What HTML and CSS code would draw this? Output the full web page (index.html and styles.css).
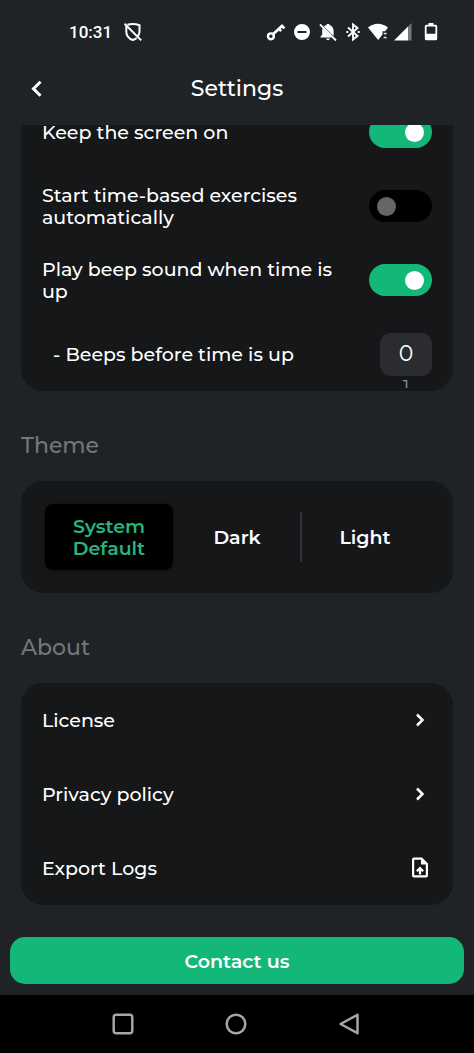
FILE: index.html
```html
<!DOCTYPE html>
<html lang="en">
<head>
<meta charset="utf-8">
<meta name="viewport" content="width=device-width, initial-scale=1">
<title>Settings</title>
<link rel="stylesheet" href="styles.css">
</head>
<body>
<div class="app">
  <div class="status-bar">
    <div class="status-left">
      <time class="clock">10:31</time>
      <svg class="status-icon" viewBox="0 0 20 20" fill="none" stroke="currentColor" stroke-width="2" aria-hidden="true"><path d="M4.500 2.800 Q10 1 16.500 3.200 V9.500 Q16.500 12.200 14.900 14.200 M3.300 4 V9.500 C3.300 14 6 16.800 10 18 C11.500 17.600 12.700 16.900 13.700 16 M1.600 1.800 L18.200 18.400"/></svg>
    </div>
    <div class="status-right">
      <svg class="status-icon" viewBox="0 0 20 20" fill="none" stroke="currentColor" aria-hidden="true"><circle cx="4.900" cy="14.300" r="2.900" stroke-width="2.400"/><path d="M7 12.200 L17 3 M13 6.800 L15.200 9.200 M16 3.900 L18.400 6.400" stroke-width="2.700"/></svg>
      <svg class="status-icon" viewBox="0 0 20 20" aria-hidden="true"><path fill="currentColor" fill-rule="evenodd" d="M10 2a8 8 0 1 0 0 16 8 8 0 0 0 0-16M5.500 9h9v2h-9z"/></svg>
      <svg class="status-icon" viewBox="0 0 20 20" aria-hidden="true"><path fill="currentColor" d="M5.900 4.500 Q7 3.500 8.700 3.100 V2 h2.600 v1.100 C14.300 3.800 15.600 6.200 15.600 9 v5 zM4.600 6.300 L13.800 15.500 H2.500 V14.500 L4.200 12.800 V9 Q4.200 7.500 4.600 6.300M8.200 16.400h3.600 a1.800 1.800 0 0 1-3.600 0"/><path d="M2 2.500 L18 18.500" stroke="currentColor" stroke-width="1.800"/></svg>
      <svg class="status-icon narrow" viewBox="1 0 18 20" fill="none" stroke="currentColor" stroke-width="1.900" aria-hidden="true"><path d="M5 5.500 L14.500 14 L10 17.500 V2.500 L14.500 6 L5 14.500"/><path d="M4.300 9v2M15.700 9v2" stroke-width="2"/></svg>
      <svg class="status-icon" viewBox="0 0 20 20" aria-hidden="true"><path fill="currentColor" d="M0 5.500 Q10-2 20 5.500 L17.200 9.200 H14.500 V12.600 L10.200 18 z"/><path d="M15.600 11.200 l1.500 1.200 1.600-1.300zM15.600 16 l1.500-1.300 1.600 1.300z" fill="currentColor" stroke="currentColor" stroke-width=".5"/></svg>
      <svg class="status-icon narrow" viewBox="0 0 18 20" aria-hidden="true"><path fill="currentColor" d="M0 18.500 L14 4.500 V18.500z"/><path fill="#73777b" d="M14 4.500 L17.500 1 V18.500 H14z"/></svg>
      <svg class="status-icon battery" viewBox="0 0 20 20" aria-hidden="true"><path fill="currentColor" fill-rule="evenodd" d="M7.500 1h5v1.800h2.200q1.500 0 1.500 1.500v12.400q0 1.500-1.500 1.500H5.300q-1.500 0-1.500-1.500V4.300q0-1.500 1.500-1.500h2.200zM5.600 4.600v7.200h8.800V4.600z"/></svg>
    </div>
  </div>

  <header class="top-bar">
    <button class="back" type="button" aria-label="Back"><svg viewBox="0 0 24 24" fill="none" stroke="currentColor" stroke-width="3" aria-hidden="true"><path d="M16.500 4.800 L9.500 11.800 L16.500 18.800"/></svg></button>
    <h1 class="title">Settings</h1>
  </header>

  <main class="content">
    <section class="card">
      <div class="row">
        <label class="row-label" for="screen-on">Keep the screen on</label>
        <input class="toggle" type="checkbox" role="switch" id="screen-on" checked>
      </div>
      <div class="row">
        <label class="row-label" for="auto-start">Start time-based exercises automatically</label>
        <input class="toggle" type="checkbox" role="switch" id="auto-start">
      </div>
      <div class="row">
        <label class="row-label" for="beep">Play beep sound when time is up</label>
        <input class="toggle" type="checkbox" role="switch" id="beep" checked>
      </div>
      <div class="row">
        <label class="row-label nested" for="beeps">- Beeps before time is up</label>
        <div class="picker">
          <input class="picker-value" type="text" inputmode="numeric" id="beeps" value="0">
          <span class="picker-next" aria-hidden="true">1</span>
        </div>
      </div>
    </section>

    <h2 class="section-title" id="theme-title">Theme</h2>
    <div class="card themes" role="radiogroup" aria-labelledby="theme-title">
      <label class="theme"><input class="theme-input" type="radio" name="theme" checked><span class="theme-name">System Default</span></label>
      <label class="theme"><input class="theme-input" type="radio" name="theme"><span class="theme-name">Dark</span></label>
      <label class="theme divided"><input class="theme-input" type="radio" name="theme"><span class="theme-name">Light</span></label>
    </div>

    <h2 class="section-title">About</h2>
    <nav class="card" aria-label="About">
      <a class="row" href="#license"><span class="row-label">License</span><svg class="row-icon" viewBox="0 0 24 24" fill="none" stroke="currentColor" stroke-width="2.500" aria-hidden="true"><path d="M9 6.500 L14.500 12 L9 17.500"/></svg></a>
      <a class="row" href="#privacy"><span class="row-label">Privacy policy</span><svg class="row-icon" viewBox="0 0 24 24" fill="none" stroke="currentColor" stroke-width="2.500" aria-hidden="true"><path d="M9 6.500 L14.500 12 L9 17.500"/></svg></a>
      <a class="row" href="#logs"><span class="row-label">Export Logs</span><svg class="row-icon" viewBox="0 0 24 24" aria-hidden="true"><path fill="currentColor" fill-rule="evenodd" d="M6 1.500h8l6 6v12q0 2-2 2H6q-2 0-2-2V3.500q0-2 2-2M6.200 3.700v15.600h11.600V8.500H13V3.700z"/><path d="M12 18.500v-6M8.800 15.300 L12 12.100 L15.200 15.300" fill="none" stroke="currentColor" stroke-width="2.200"/></svg></a>
    </nav>
  </main>

  <footer class="actions">
    <button class="contact" type="button">Contact us</button>
  </footer>

  <nav class="system-nav" aria-label="System">
    <button class="system-button" type="button" aria-label="Recent apps"><svg viewBox="0 0 24 24" fill="none" stroke="currentColor" stroke-width="2.500" aria-hidden="true"><rect x="2.700" y="2.700" width="18.600" height="18.600" rx="2.500"/></svg></button>
    <button class="system-button" type="button" aria-label="Home"><svg viewBox="0 0 24 24" fill="none" stroke="currentColor" stroke-width="2.500" aria-hidden="true"><circle cx="12" cy="12" r="9.300"/></svg></button>
    <button class="system-button" type="button" aria-label="Back"><svg viewBox="0 0 24 24" fill="none" stroke="currentColor" stroke-width="2.500" stroke-linejoin="round" aria-hidden="true"><path d="M20.500 2.800 V21.200 L3.500 12z"/></svg></button>
  </nav>
</div>
</body>
</html>
```
FILE: styles.css
```css
* {
  box-sizing: border-box;
}

body {
  margin: 0;
  background: #1f2326;
  color: #fff;
  font-family: Montserrat, Inter, sans-serif;
  font-size: 19px;
  line-height: 22px;
}

button,
input {
  margin: 0;
  padding: 0;
  border: 0;
  color: inherit;
  font: inherit;
}

button {
  background: none;
}

svg {
  display: block;
}

.app {
  display: flex;
  flex-direction: column;
  height: 100vh;
}

.status-bar {
  display: flex;
  flex: none;
  justify-content: space-between;
  align-items: center;
  height: 64px;
  padding: 0 33px 0 69px;
}

.status-left,
.status-right {
  display: flex;
  align-items: center;
  gap: 6px;
}

.status-left {
  gap: 11px;
}

.clock {
  font-family: Roboto, sans-serif;
  font-size: 17px;
  font-weight: 500;
}

.status-icon {
  width: 20px;
  height: 20px;
}

.narrow {
  width: 18px;
}

.battery {
  margin-left: 3px;
}

.top-bar {
  display: grid;
  flex: none;
  grid-template-columns: 48px 1fr 48px;
  align-items: center;
  height: 61px;
  padding: 0 12px 12px;
}

.back {
  display: grid;
  place-items: center;
  height: 48px;
}

.back svg {
  width: 24px;
  height: 24px;
}

.title {
  margin: 0;
  font-size: 22px;
  font-weight: 500;
  text-align: center;
}

.content {
  display: flex;
  flex: 1;
  flex-direction: column;
  justify-content: flex-end;
  min-height: 0;
  padding: 0 21px 32px;
  overflow: hidden;
}

.card {
  flex: none;
  border-radius: 22px;
  background: #151719;
}

.row {
  display: flex;
  justify-content: space-between;
  align-items: center;
  gap: 24px;
  min-height: 74px;
  padding: 0 21px;
  color: inherit;
  text-decoration: none;
}

.row-label {
  flex: 1;
  padding-top: 2px;
  font-weight: 500;
}

.nested {
  padding-left: 11px;
}

.row-icon {
  flex: none;
  width: 24px;
  height: 24px;
}

.toggle {
  display: flex;
  flex: none;
  align-items: center;
  width: 63px;
  height: 32px;
  padding: 0 8px;
  border-radius: 16px;
  background: #000;
  appearance: none;
}

.toggle::before {
  width: 19px;
  height: 19px;
  border-radius: 50%;
  background: #666;
  content: "";
}

.toggle:checked {
  justify-content: flex-end;
  background: #13b879;
}

.toggle:checked::before {
  background: #fff;
}

.picker {
  position: relative;
}

.picker-value {
  display: block;
  width: 52px;
  height: 43px;
  padding-bottom: 2px;
  border-radius: 11px;
  background: #2b2c30;
  font-size: 22px;
  text-align: center;
}

.picker-next {
  position: absolute;
  top: 43px;
  right: 0;
  left: 0;
  height: 12px;
  overflow: hidden;
  color: #8b8c8f;
  font-size: 19px;
  text-align: center;
}

.section-title {
  display: flex;
  flex: none;
  align-items: center;
  height: 90px;
  margin: 0;
  padding-top: 20px;
  color: #74777a;
  font-size: 22px;
  font-weight: 500;
}

.themes {
  display: grid;
  grid-template-columns: repeat(3, 1fr);
  padding: 23px 24px;
}

.theme {
  display: grid;
  position: relative;
  font-weight: 600;
  text-align: center;
}

.theme-input {
  position: absolute;
  inset: 0;
  opacity: 0;
}

.theme-name {
  display: grid;
  place-items: center;
  min-height: 66px;
  padding: 2px 24px 0;
  border-radius: 8px;
}

.theme-input:checked + .theme-name {
  background: #000;
  box-shadow: 0 1px 4px rgb(0 0 0 / 40%);
  color: #25b67f;
}

.divided::before {
  position: absolute;
  top: 8px;
  bottom: 8px;
  left: -1px;
  width: 2px;
  background: #303235;
  content: "";
}

.actions {
  flex: none;
  padding: 0 10px 11px;
}

.contact {
  display: block;
  width: 100%;
  height: 47px;
  padding-top: 2px;
  border-radius: 15px;
  background: #13b879;
  font-weight: 600;
}

.system-nav {
  display: flex;
  flex: none;
  justify-content: center;
  gap: 65px;
  height: 58px;
  padding-right: 2px;
  background: #000;
  color: #a5a5a5;
}

.system-button {
  display: grid;
  place-items: center;
  width: 48px;
}

.system-button svg {
  width: 24px;
  height: 24px;
}
```
